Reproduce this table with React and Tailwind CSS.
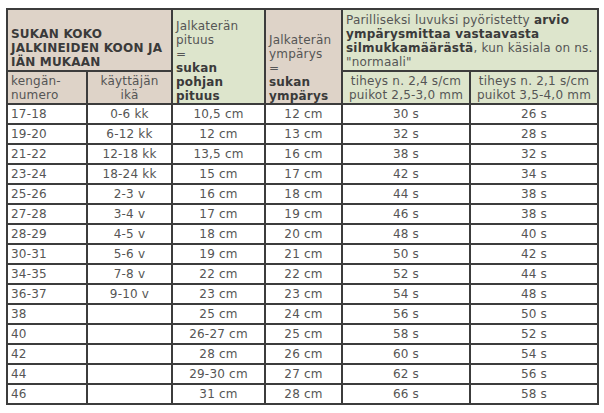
import React from 'react';

const rows = [
  ['17-18', '0-6 kk', '10,5 cm', '12 cm', '30 s', '26 s'],
  ['19-20', '6-12 kk', '12 cm', '13 cm', '32 s', '28 s'],
  ['21-22', '12-18 kk', '13,5 cm', '16 cm', '38 s', '32 s'],
  ['23-24', '18-24 kk', '15 cm', '17 cm', '42 s', '34 s'],
  ['25-26', '2-3 v', '16 cm', '18 cm', '44 s', '38 s'],
  ['27-28', '3-4 v', '17 cm', '19 cm', '46 s', '38 s'],
  ['28-29', '4-5 v', '18 cm', '20 cm', '48 s', '40 s'],
  ['30-31', '5-6 v', '19 cm', '21 cm', '50 s', '42 s'],
  ['34-35', '7-8 v', '22 cm', '22 cm', '52 s', '44 s'],
  ['36-37', '9-10 v', '23 cm', '23 cm', '54 s', '48 s'],
  ['38', '', '25 cm', '24 cm', '56 s', '50 s'],
  ['40', '', '26-27 cm', '25 cm', '58 s', '52 s'],
  ['42', '', '28 cm', '26 cm', '60 s', '54 s'],
  ['44', '', '29-30 cm', '27 cm', '62 s', '56 s'],
  ['46', '', '31 cm', '28 cm', '66 s', '58 s'],
];

const cell = 'border border-[#3c3c3c] px-[3px] whitespace-nowrap';

const App = () => {
  return (
    <div className="bg-white w-[604px] h-[413px] pt-2 pl-1.5 font-['DejaVu_Sans',Verdana,sans-serif] text-[12px] leading-[14px] tracking-[0.2px] text-[#555]">
      <table className="table-fixed border-separate border-spacing-0 w-[592px] border border-[#3c3c3c]">
        <colgroup>
          <col className="w-[80px]" />
          <col className="w-[85px]" />
          <col className="w-[93px]" />
          <col className="w-[77px]" />
          <col className="w-[128px]" />
          <col className="w-[128px]" />
        </colgroup>
        <thead>
          <tr className="h-[62px]">
            <th colSpan="2" className={`${cell} bg-[#ded3c8] text-left align-bottom font-bold text-[#3a3a3a] pb-[1px]`}>
              SUKAN KOKO<br />JALKINEIDEN KOON JA<br />IÄN MUKAAN
            </th>
            <th rowSpan="2" className={`${cell} bg-[#dde5cc] text-left align-bottom font-normal`}>
              Jalkaterän<br />pituus<br />=<br />
              <b className="text-[#3a3a3a]">sukan<br />pohjan<br />pituus</b>
            </th>
            <th rowSpan="2" className={`${cell} bg-[#ded3c8] text-left align-bottom font-normal`}>
              Jalkaterän<br />ympärys<br />=<br />
              <b className="text-[#3a3a3a]">sukan<br />ympärys</b>
            </th>
            <th colSpan="2" className={`${cell} bg-[#dde5cc] text-left align-bottom font-normal pb-[1px]`}>
              Parilliseksi luvuksi pyöristetty <b className="text-[#3a3a3a]">arvio</b><br />
              <b className="text-[#3a3a3a]">ympärysmittaa vastaavasta</b><br />
              <b className="text-[#3a3a3a]">silmukkamäärästä</b>, kun käsiala on ns.<br />
              "normaali"
            </th>
          </tr>
          <tr className="h-[33px]">
            <th className={`${cell} bg-[#ded3c8] text-left align-middle font-normal`}>
              kengän-<br />numero
            </th>
            <th className={`${cell} bg-[#ded3c8] text-center align-middle font-normal`}>
              käyttäjän<br />ikä
            </th>
            <th className={`${cell} bg-[#dde5cc] text-center align-middle font-normal`}>
              tiheys n. 2,4 s/cm<br />puikot 2,5-3,0 mm
            </th>
            <th className={`${cell} bg-[#dde5cc] text-center align-middle font-normal`}>
              tiheys n. 2,1 s/cm<br />puikot 3,5-4,0 mm
            </th>
          </tr>
        </thead>
        <tbody>
          {rows.map((r) => (
            <tr key={r[0]} className="h-[20px]">
              {r.map((v, i) => (
                <td key={i} className={`${cell} py-0 ${i === 0 ? 'text-left' : 'text-center'}`}>
                  {v}
                </td>
              ))}
            </tr>
          ))}
        </tbody>
      </table>
    </div>
  );
};

export default App;
